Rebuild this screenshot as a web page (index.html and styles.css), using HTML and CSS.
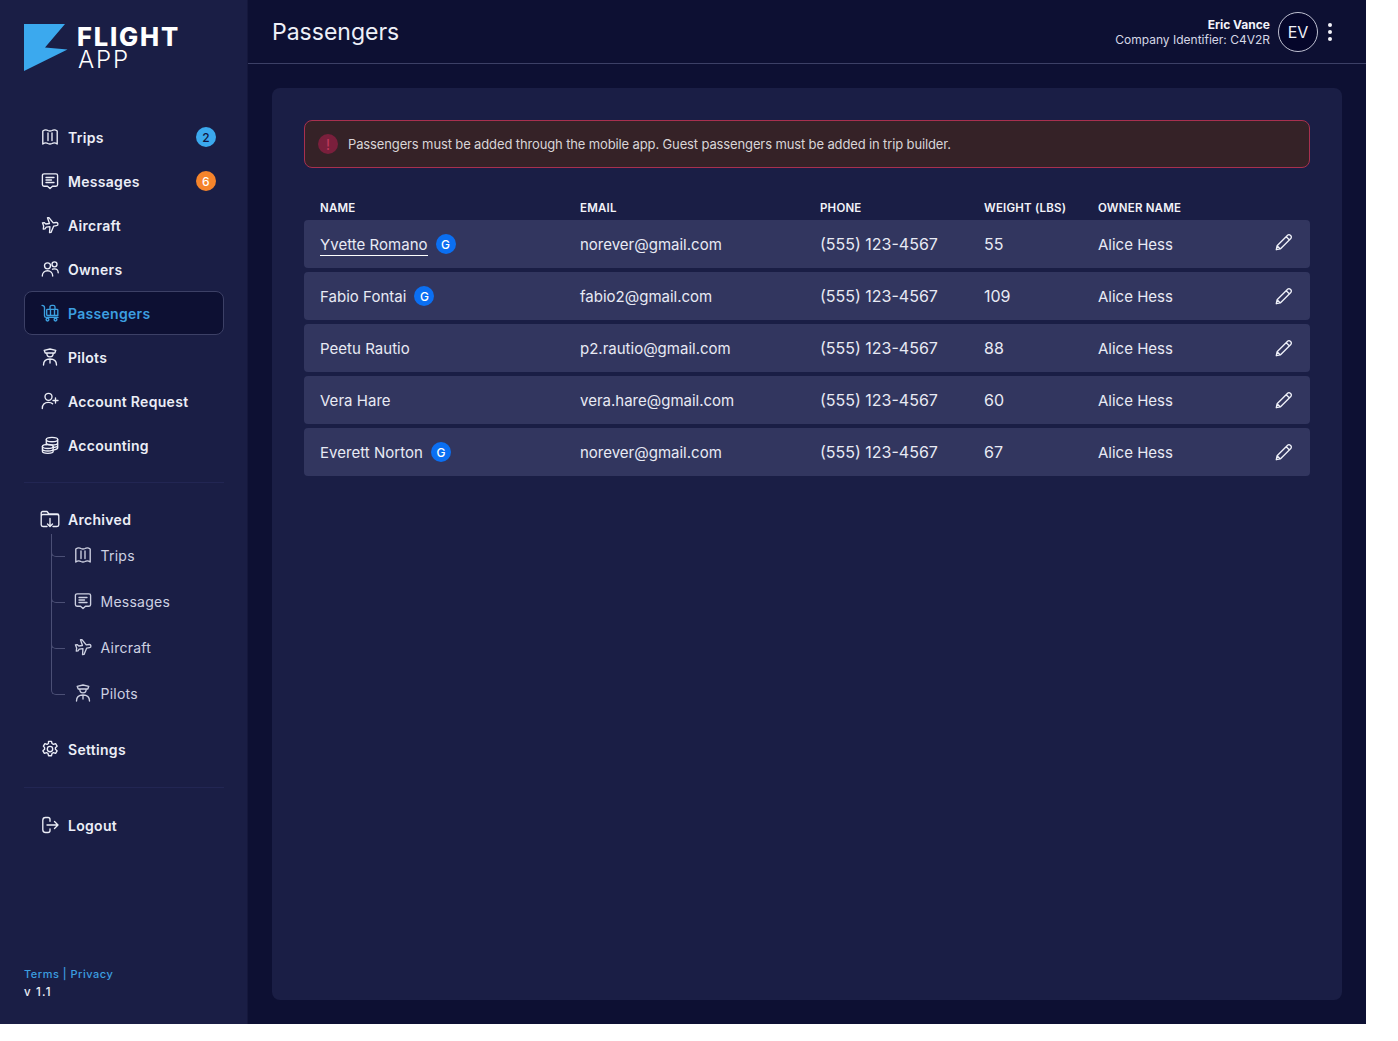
FILE: index.html
```html
<!DOCTYPE html>
<html lang="en">
<head>
<meta charset="utf-8">
<title>Passengers</title>
<link rel="stylesheet" href="styles.css">
</head>
<body>
<svg class="defs" width="0" height="0" aria-hidden="true">
<defs>
<symbol id="i-map" viewBox="0 0 18 18"><path d="M1.800 3c1.700-1.300 3.500-1.500 5.200-.5 1.300.7 2.700.7 4 0 1.700-1 3.500-.8 5.200.5v13c-1.700-1.300-3.500-1.500-5.200-.5-1.300.7-2.700.7-4 0-1.700-1-3.500-.8-5.200.5zM7 5v7.500M11 5v7.500"/></symbol>
<symbol id="i-msg" viewBox="0 0 18 18"><path d="M3 1.800h12A1.600 1.600 0 0 1 16.600 3.400v9.200a1.600 1.600 0 0 1-1.600 1.600h-3.500L9 16.600l-2.500-2.400H3a1.600 1.600 0 0 1-1.600-1.600V3.400A1.600 1.600 0 0 1 3 1.800zM5 5.500h8M5 8h5.500M5 10.500h8"/></symbol>
<symbol id="i-plane" viewBox="0 0 18 18"><g transform="rotate(-8 9 9)"><path d="M7.500 1.500H9l3.500 5.900h2.900a1.600 1.600 0 0 1 0 3.200h-2.900L9 16.500H7.500l1.200-5.900H5l-1.500 1.600H1.800l.8-3.200-.8-3.200h1.700L5 7.400h3.700z"/></g></symbol>
<symbol id="i-users" viewBox="0 0 18 18"><circle cx="6.500" cy="5.800" r="3"/><circle cx="13.500" cy="4.300" r="2.500"/><path d="M1.300 16c0-3.200 2.200-5.300 5.200-5.300s5.200 2.100 5.200 5.300M11.500 9.200c.6-.3 1.300-.4 2-.4 2.200 0 3.700 1.700 3.700 4"/></symbol>
<symbol id="i-cart" viewBox="0 0 18 18"><path d="M1 1.300c1.600 0 2.400.7 2.500 2.200v8.300c0 1 .7 1.600 1.600 1.600H17M6.500 5.300h9.500a.8.8 0 0 1 .8.8v5.400H6.500a.8.8 0 0 1-.8-.8V6.100a.8.800 0 0 1 .8-.8zM9 5.300V3.100A1.800 1.800 0 0 1 10.800 1.300h1.400A1.800 1.800 0 0 1 14 3.100v2.200M9.500 5.300v6.200M13.500 5.300v6.200"/><circle cx="6.500" cy="15.600" r="1.400"/><circle cx="14.500" cy="15.600" r="1.400"/></symbol>
<symbol id="i-pilot" viewBox="0 0 18 18"><path d="M3.200 2.300 9 1l5.800 1.300-1 2.700H4.200zM5.800 5.200c0 2.200 1.300 3.600 3.200 3.600s3.200-1.400 3.200-3.600M2.500 17c0-3.800 2.600-6 6.500-6s6.500 2.200 6.500 6M9 11v4"/></symbol>
<symbol id="i-adduser" viewBox="0 0 18 18"><circle cx="7.500" cy="4.800" r="3.500"/><path d="M1.300 16.500c0-3.900 2.600-6.200 6.200-6.200 1.700 0 3.100.5 4.100 1.400M14.500 6v5M12 8.500h5"/></symbol>
<symbol id="i-coins" viewBox="0 0 18 18"><ellipse cx="11" cy="3.500" rx="5.700" ry="2.200"/><path d="M5.300 3.500v5M16.700 3.500v8.300c0 1-1.700 1.800-3.500 2.100M5.300 6.800c0 1.200 2.500 2.200 5.700 2.200s5.700-1 5.700-2.200M12.500 11.500c2.300-.2 4.200-1 4.200-2.200"/><ellipse cx="6.800" cy="10.500" rx="5.400" ry="2"/><path d="M1.400 10.500v4.800c0 1.100 2.400 2 5.400 2s5.400-.9 5.400-2v-4.800M1.400 13c0 1.100 2.400 2 5.400 2s5.400-.9 5.400-2"/></symbol>
<symbol id="i-folder" viewBox="0 0 20 18"><path d="M7 16.500H3A1.800 1.800 0 0 1 1.200 14.700V3A1.500 1.500 0 0 1 2.700 1.500H7l2 2.500h8.300A1.500 1.500 0 0 1 18.800 5.500v9.200a1.800 1.800 0 0 1-1.800 1.800h-4M1.200 6.200c0-1 .7-1.700 1.700-1.700h14.200c1 0 1.700.7 1.700 1.700M10 8.500v8M7.500 14l2.500 2.500 2.500-2.500"/></symbol>
<symbol id="i-gear" viewBox="0 0 18 18"><circle cx="9" cy="9" r="2.700"/><path d="M7.500 1.300h3l.5 2.200 1.400.8 2.200-.7 1.500 2.600-1.700 1.500v1.600l1.700 1.500-1.500 2.600-2.200-.7-1.400.8-.5 2.200h-3l-.5-2.200-1.400-.8-2.200.7-1.500-2.600 1.700-1.500V7.700L2.400 6.200l1.500-2.600 2.200.7 1.400-.8z"/></symbol>
<symbol id="i-logout" viewBox="0 0 18 18"><path d="M9 5.200V3.500A2 2 0 0 0 7 1.500H4.500A2.700 2.700 0 0 0 1.800 4.200v9.600a2.700 2.700 0 0 0 2.700 2.700H7a2 2 0 0 0 2-2v-1.700M6 9h11M13.500 5.500 17 9l-3.500 3.500"/></symbol>
<symbol id="i-pencil" viewBox="0 0 18 18"><path d="M1.300 16.700l.8-4L12.600 2.200a1.900 1.900 0 0 1 2.700 0l.5.500a1.900 1.900 0 0 1 0 2.700L5.300 15.900zM11.200 3.700l3.100 3.100M2.100 12.700l3.200 3.200"/></symbol>
</defs>
</svg>
<div class="app">
  <aside class="sidebar">
    <div class="logo">
      <svg class="logo-mark" viewBox="0 0 44 48"><polygon points="0,0 41,0 21,23.500 43.500,25.500 0,47" fill="#3ba9ee"/></svg>
      <div class="logo-text"><span class="logo-top">FLIGHT</span><span class="logo-bottom">APP</span></div>
    </div>
    <nav class="nav">
      <a class="nav-item"><svg class="ic"><use href="#i-map"/></svg><span>Trips</span><b class="badge badge-blue">2</b></a>
      <a class="nav-item"><svg class="ic"><use href="#i-msg"/></svg><span>Messages</span><b class="badge badge-orange">6</b></a>
      <a class="nav-item"><svg class="ic"><use href="#i-plane"/></svg><span>Aircraft</span></a>
      <a class="nav-item"><svg class="ic"><use href="#i-users"/></svg><span>Owners</span></a>
      <a class="nav-item active"><svg class="ic"><use href="#i-cart"/></svg><span>Passengers</span></a>
      <a class="nav-item"><svg class="ic"><use href="#i-pilot"/></svg><span>Pilots</span></a>
      <a class="nav-item"><svg class="ic"><use href="#i-adduser"/></svg><span>Account Request</span></a>
      <a class="nav-item"><svg class="ic"><use href="#i-coins"/></svg><span>Accounting</span></a>
    </nav>
    <div class="divider first"></div>
    <a class="nav-item archived"><svg class="ic ic-folder"><use href="#i-folder"/></svg><span>Archived</span></a>
    <div class="subnav">
      <a class="sub-item"><svg class="ic"><use href="#i-map"/></svg><span>Trips</span></a>
      <a class="sub-item"><svg class="ic"><use href="#i-msg"/></svg><span>Messages</span></a>
      <a class="sub-item"><svg class="ic"><use href="#i-plane"/></svg><span>Aircraft</span></a>
      <a class="sub-item"><svg class="ic"><use href="#i-pilot"/></svg><span>Pilots</span></a>
    </div>
    <a class="nav-item settings"><svg class="ic"><use href="#i-gear"/></svg><span>Settings</span></a>
    <div class="divider second"></div>
    <a class="nav-item logout"><svg class="ic"><use href="#i-logout"/></svg><span>Logout</span></a>
    <footer class="side-foot">
      <div class="legal">Terms | Privacy</div>
      <div class="version">v 1.1</div>
    </footer>
  </aside>
  <div class="main">
    <header class="topbar">
      <h1>Passengers</h1>
      <div class="user">
        <div class="user-text"><strong>Eric Vance</strong><span>Company Identifier: C4V2R</span></div>
        <div class="avatar">EV</div>
        <div class="kebab"><i></i><i></i><i></i></div>
      </div>
    </header>
    <section class="content">
      <div class="panel">
        <div class="alert"><span class="alert-icon">!</span><span>Passengers must be added through the mobile app. Guest passengers must be added in trip builder.</span></div>
        <div class="row head"><div>Name</div><div>Email</div><div>Phone</div><div>Weight (lbs)</div><div>Owner Name</div></div>
        <div class="rows">
          <div class="row"><div class="name"><span class="linked">Yvette Romano</span><span class="g">G</span></div><div>norever@gmail.com</div><div class="num">(555) 123-4567</div><div class="num">55</div><div>Alice Hess</div><svg class="ic edit"><use href="#i-pencil"/></svg></div>
          <div class="row"><div class="name"><span>Fabio Fontai</span><span class="g">G</span></div><div>fabio2@gmail.com</div><div class="num">(555) 123-4567</div><div class="num">109</div><div>Alice Hess</div><svg class="ic edit"><use href="#i-pencil"/></svg></div>
          <div class="row"><div class="name"><span>Peetu Rautio</span></div><div>p2.rautio@gmail.com</div><div class="num">(555) 123-4567</div><div class="num">88</div><div>Alice Hess</div><svg class="ic edit"><use href="#i-pencil"/></svg></div>
          <div class="row"><div class="name"><span>Vera Hare</span></div><div>vera.hare@gmail.com</div><div class="num">(555) 123-4567</div><div class="num">60</div><div>Alice Hess</div><svg class="ic edit"><use href="#i-pencil"/></svg></div>
          <div class="row"><div class="name"><span>Everett Norton</span><span class="g">G</span></div><div>norever@gmail.com</div><div class="num">(555) 123-4567</div><div class="num">67</div><div>Alice Hess</div><svg class="ic edit"><use href="#i-pencil"/></svg></div>
        </div>
      </div>
    </section>
  </div>
</div>
</body>
</html>
```
FILE: styles.css
```css
* { box-sizing: border-box; }
html, body { margin: 0; background: #fff; }
body { font-family: Inter, "Liberation Sans", sans-serif; color: #eef0f8; height: 1041px; overflow: hidden; }
.defs { display: block; height: 0; }
.app { width: 1366px; height: 1024px; display: flex; background: #0d1033; }
.ic { width: 18px; height: 18px; fill: none; stroke: currentColor; stroke-width: 1.35; stroke-linecap: round; stroke-linejoin: round; flex: none; }

.sidebar { width: 248px; flex: none; background: #1a1e45; border-right: 1px solid #15183c; padding: 24px 23px 0 24px; display: flex; flex-direction: column; }
.logo { display: flex; gap: 10px; height: 48px; margin-bottom: 43px; }
.logo-mark { width: 44px; height: 48px; flex: none; }
.logo-text { display: flex; flex-direction: column; margin-left: -1px; }
.logo-top { font-weight: 800; font-size: 25.500px; line-height: 20px; margin-top: 3px; letter-spacing: 1.800px; color: #fff; }
.logo-bottom { font-weight: 300; font-size: 24px; line-height: 20px; margin-top: 3px; letter-spacing: 1.900px; padding-left: 1px; color: #fff; }

.nav { display: flex; flex-direction: column; }
.nav-item { height: 44px; display: flex; align-items: center; gap: 9px; padding: 0 7px 0 16px; border: 1px solid transparent; border-radius: 8px; font-size: 14px; font-weight: 600; letter-spacing: .3px; color: #eceef7; }
.nav-item.active { background: #0d1033; border-color: #3c4066; color: #3c9fe0; }
.badge { margin-left: auto; width: 20px; height: 20px; border-radius: 50%; display: flex; align-items: center; justify-content: center; font-size: 12px; font-weight: 500; }
.badge-blue { background: #3ba9ee; color: #111540; }
.badge-orange { background: #f5842b; color: #fff; }
.divider { height: 1px; background: #222653; }
.divider.first { margin: 15px 0 14px; }
.archived .ic-folder { width: 20px; margin-left: -1px; margin-right: -1px; }
.subnav { position: relative; margin-top: -7px; margin-left: 27px; display: flex; flex-direction: column; }
.subnav::before { content: ""; position: absolute; left: 0; top: 0; width: 1px; height: 156px; background: #4b4f75; }
.sub-item { position: relative; height: 46px; display: flex; align-items: center; gap: 8.500px; padding-left: 23px; font-size: 14px; font-weight: 400; letter-spacing: .25px; color: #ced1e2; }
.sub-item::before { content: ""; position: absolute; left: 0; top: 17px; width: 13px; height: 7px; border-left: 1px solid #4b4f75; border-bottom: 1px solid #4b4f75; border-bottom-left-radius: 5px; }
.sub-item:first-child { margin-top: -2px; }
.settings { margin-top: 11px; }
.divider.second { margin: 16px 0 15px; }
.side-foot { margin-top: auto; padding-bottom: 23px; font-size: 11px; font-weight: 500; letter-spacing: .5px; line-height: 18px; }
.legal { color: #3c9fe0; }
.version { color: #eceef7; font-size: 11.500px; letter-spacing: 1.200px; }

.main { flex: 1; min-width: 0; display: flex; flex-direction: column; }
.topbar { height: 64px; flex: none; border-bottom: 1px solid #3c4066; display: flex; align-items: center; justify-content: space-between; padding: 0 34px 0 24px; }
.topbar h1 { margin: 0; font-size: 23px; font-weight: 400; color: #eef0f8; }
.user { display: flex; align-items: center; }
.user-text { display: flex; flex-direction: column; align-items: flex-end; font-size: 12px; line-height: 15px; color: #d5d7e6; margin-right: 8px; }
.user-text strong { font-weight: 700; color: #f2f3f9; }
.avatar { width: 40px; height: 40px; border-radius: 50%; border: 1px solid #bfc1d2; background: #05062a; display: flex; align-items: center; justify-content: center; font-size: 16px; color: #eef0f8; }
.kebab { width: 4px; margin-left: 10px; display: flex; flex-direction: column; gap: 3px; }
.kebab i { width: 4px; height: 4px; border-radius: 50%; background: #f2f3f9; }

.content { flex: 1; padding: 24px; min-height: 0; }
.panel { height: 100%; background: #1a1e45; border-radius: 8px; padding: 32px; }
.alert { height: 48px; display: flex; align-items: center; gap: 10px; padding: 0 13px; background: #352227; border: 1px solid #a8304f; border-radius: 8px; font-size: 13px; letter-spacing: -.13px; color: #d9d5d7; }
.alert-icon { width: 20px; height: 20px; flex: none; border-radius: 50%; background: #7a1f3c; color: #c23a5c; display: flex; align-items: center; justify-content: center; font-size: 14px; }
.rows { display: flex; flex-direction: column; gap: 4px; }
.row { position: relative; height: 48px; display: grid; grid-template-columns: 260px 240px 164px 114px 1fr; align-items: center; padding: 0 16px; background: #32365f; border-radius: 4px; font-size: 15px; color: #e8eaf4; }
.row.head { height: 22px; margin-top: 29px; margin-bottom: 1px; background: none; font-size: 11.500px; font-weight: 600; letter-spacing: .2px; text-transform: uppercase; color: #f2f3f9; }
.num { font-size: 16px; }
.name { display: flex; align-items: center; gap: 8px; letter-spacing: .03px; }
.linked { padding: 2px 0 1px; border-bottom: 1px solid #fff; }
.g { width: 20px; height: 20px; border-radius: 50%; background: #0b6ff2; color: #fff; display: flex; align-items: center; justify-content: center; font-size: 12px; font-weight: 500; }
.edit { position: absolute; right: 17px; top: 15px; color: #eef0f8; }
.row:first-child .edit { top: 13px; }
```
